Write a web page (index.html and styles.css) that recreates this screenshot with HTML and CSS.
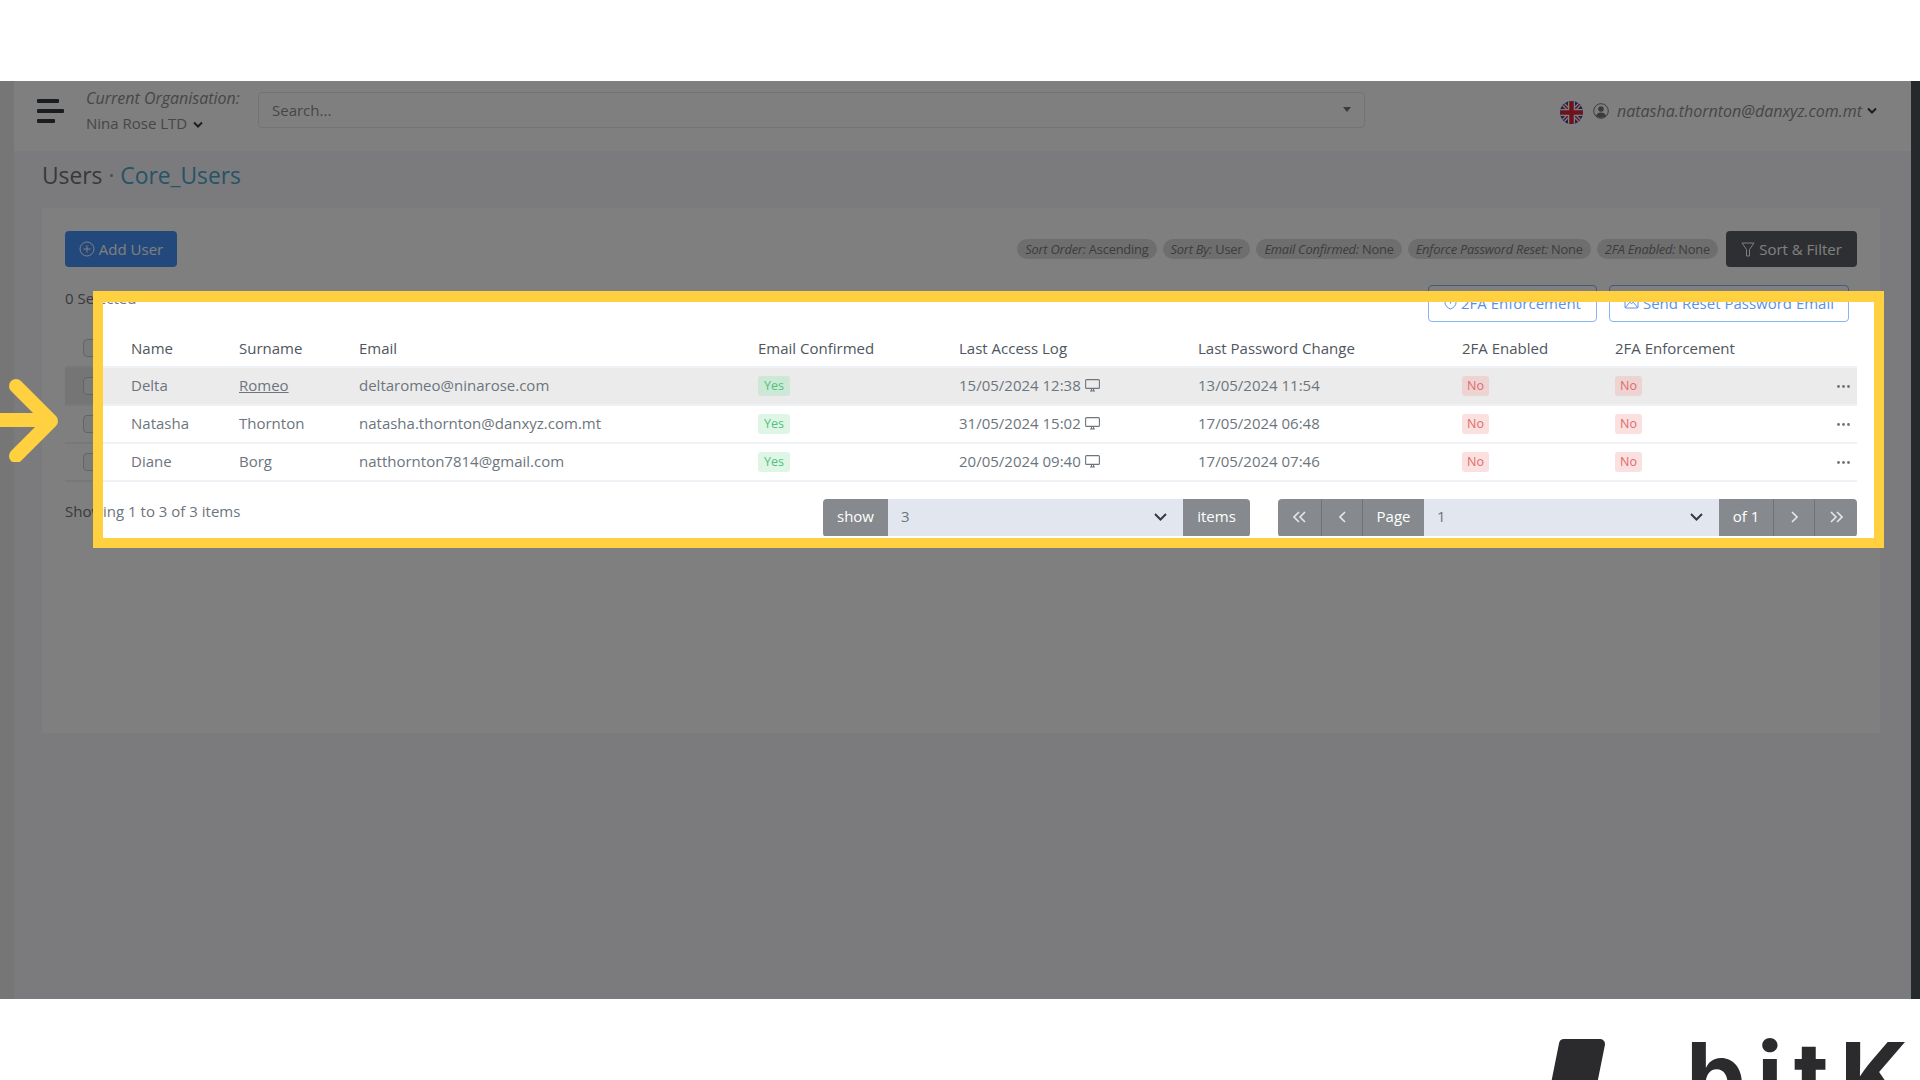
FILE: index.html
```html
<!DOCTYPE html>
<html lang="en">
<head>
    <meta charset="UTF-8">
    <title>Users - Core_Users</title>
    <link rel="stylesheet" href="styles.css">
</head>
<body>
    <div class="top-gap"></div>

    <div class="app">
        <div class="sidebar"></div>

        <div class="main">
            <header class="nav">
                <svg class="menu" width="27" height="24" viewBox="0 0 27 24">
                    <rect x="0" y="0" width="22" height="4" rx="1"/>
                    <rect x="0" y="10" width="27" height="4" rx="1"/>
                    <rect x="0" y="20" width="18" height="4" rx="1"/>
                </svg>
                <div class="org">
                    <div class="org-label">Current Organisation:</div>
                    <div class="org-name">Nina Rose LTD
                        <svg class="chev" width="10" height="8" viewBox="0 0 10 8"><path d="M1 1.5 5 5.5 9 1.5"/></svg>
                    </div>
                </div>
                <div class="search">
                    <span>Search...</span>
                    <i class="caret"></i>
                </div>
                <div class="account">
                    <svg class="flag" width="23" height="23" viewBox="0 0 23 23">
                        <clipPath id="flagclip"><circle cx="11.5" cy="11.5" r="11.5"/></clipPath>
                        <g clip-path="url(#flagclip)">
                            <rect width="23" height="23" fill="#2a4aa8"/>
                            <path d="M0 0 23 23M23 0 0 23" stroke="#fff" stroke-width="4"/>
                            <path d="M0 0 23 23M23 0 0 23" stroke="#d8283c" stroke-width="1.5"/>
                            <path d="M11.5 0V23M0 11.5H23" stroke="#fff" stroke-width="7"/>
                            <path d="M11.5 0V23M0 11.5H23" stroke="#d8283c" stroke-width="4.5"/>
                        </g>
                    </svg>
                    <svg class="user" width="16" height="16" viewBox="0 0 16 16">
                        <circle cx="8" cy="8" r="7.3" fill="none" stroke-width="1"/>
                        <circle class="solid" cx="8" cy="6" r="2.8"/>
                        <path class="solid" d="M3 12.8c.8-2.4 2.6-3.4 5-3.4s4.200 1 5 3.400c-1.300 1.300-3 2-5 2s-3.700-.7-5-2z"/>
                    </svg>
                    <span class="account-mail">natasha.thornton@danxyz.com.mt</span>
                    <svg class="chev" width="10" height="8" viewBox="0 0 10 8"><path d="M1 1.5 5 5.500 9 1.500"/></svg>
                </div>
            </header>

            <div class="content">
                <h1 class="title">Users <span class="dot">·</span> <a class="title-link">Core_Users</a></h1>

                <section class="card">
                    <div class="toolbar">
                        <button class="btn btn-blue">
                            <svg width="16" height="16" viewBox="0 0 16 16"><circle cx="8" cy="8" r="7"/><path d="M8 4.500v7M4.500 8h7"/></svg>
                            Add User
                        </button>
                        <div class="filters">
                            <span class="chip"><em>Sort Order:</em> Ascending</span>
                            <span class="chip"><em>Sort By:</em> User</span>
                            <span class="chip"><em>Email Confirmed:</em> None</span>
                            <span class="chip"><em>Enforce Password Reset:</em> None</span>
                            <span class="chip"><em>2FA Enabled:</em> None</span>
                            <button class="btn btn-dark">
                                <svg width="14" height="15" viewBox="0 0 14 15"><path d="M1 1h12L8.500 7.500V14H5.500V7.500z"/></svg>
                                Sort &amp; Filter
                            </button>
                        </div>
                    </div>

                    <div class="actions">
                        <span class="selected">0 Selected</span>
                        <div class="action-btns">
                            <button class="btn btn-line btn-2fa">
                                <svg width="13" height="15" viewBox="0 0 13 15"><path d="M6.500 1 12 3v4.500c0 3-2.200 5.300-5.500 6.500C3.200 12.800 1 10.500 1 7.500V3z"/><path d="M6.500 4.500v4"/></svg>
                                2FA Enforcement
                            </button>
                            <button class="btn btn-line btn-mail">
                                <svg width="15" height="13" viewBox="0 0 15 13"><rect x="1" y="1" width="13" height="11" rx="1"/><path d="M1 3l6.500 4.500L14 3M1 12l4.500-5.500M14 12 9.500 6.500"/></svg>
                                Send Reset Password Email
                            </button>
                        </div>
                    </div>

                    <table class="users">
                        <colgroup>
                            <col class="c-check"><col class="c-name"><col class="c-surname"><col class="c-email">
                            <col class="c-conf"><col class="c-access"><col class="c-pass"><col class="c-2fa">
                            <col class="c-enf"><col class="c-more">
                        </colgroup>
                        <thead>
                            <tr>
                                <th class="check"><i class="box"></i></th>
                                <th>Name</th>
                                <th>Surname</th>
                                <th>Email</th>
                                <th>Email Confirmed</th>
                                <th>Last Access Log</th>
                                <th>Last Password Change</th>
                                <th>2FA Enabled</th>
                                <th>2FA Enforcement</th>
                                <th></th>
                            </tr>
                        </thead>
                        <tbody>
                            <tr class="hover">
                                <td class="check"><i class="box"></i></td>
                                <td>Delta</td>
                                <td><a class="link">Romeo</a></td>
                                <td>deltaromeo@ninarose.com</td>
                                <td><span class="badge yes">Yes</span></td>
                                <td>15/05/2024 12:38 <svg class="screen" width="15" height="13" viewBox="0 0 15 13"><rect x=".6" y=".6" width="13.800" height="8.800" rx="1"/><path d="M5 12h5M6.500 9.500h2v2.500h-2z"/></svg></td>
                                <td>13/05/2024 11:54</td>
                                <td><span class="badge no">No</span></td>
                                <td><span class="badge no">No</span></td>
                                <td class="more"><svg width="13" height="3" viewBox="0 0 13 3"><circle cx="1.500" cy="1.500" r="1.400"/><circle cx="6.500" cy="1.500" r="1.400"/><circle cx="11.500" cy="1.500" r="1.400"/></svg></td>
                            </tr>
                            <tr>
                                <td class="check"><i class="box"></i></td>
                                <td>Natasha</td>
                                <td>Thornton</td>
                                <td>natasha.thornton@danxyz.com.mt</td>
                                <td><span class="badge yes">Yes</span></td>
                                <td>31/05/2024 15:02 <svg class="screen" width="15" height="13" viewBox="0 0 15 13"><rect x=".6" y=".6" width="13.800" height="8.800" rx="1"/><path d="M5 12h5M6.500 9.500h2v2.500h-2z"/></svg></td>
                                <td>17/05/2024 06:48</td>
                                <td><span class="badge no">No</span></td>
                                <td><span class="badge no">No</span></td>
                                <td class="more"><svg width="13" height="3" viewBox="0 0 13 3"><circle cx="1.500" cy="1.500" r="1.400"/><circle cx="6.500" cy="1.500" r="1.400"/><circle cx="11.500" cy="1.500" r="1.400"/></svg></td>
                            </tr>
                            <tr>
                                <td class="check"><i class="box"></i></td>
                                <td>Diane</td>
                                <td>Borg</td>
                                <td>natthornton7814@gmail.com</td>
                                <td><span class="badge yes">Yes</span></td>
                                <td>20/05/2024 09:40 <svg class="screen" width="15" height="13" viewBox="0 0 15 13"><rect x=".6" y=".6" width="13.800" height="8.800" rx="1"/><path d="M5 12h5M6.500 9.500h2v2.500h-2z"/></svg></td>
                                <td>17/05/2024 07:46</td>
                                <td><span class="badge no">No</span></td>
                                <td><span class="badge no">No</span></td>
                                <td class="more"><svg width="13" height="3" viewBox="0 0 13 3"><circle cx="1.500" cy="1.500" r="1.400"/><circle cx="6.500" cy="1.500" r="1.400"/><circle cx="11.500" cy="1.500" r="1.400"/></svg></td>
                            </tr>
                        </tbody>
                    </table>

                    <div class="pager-row">
                        <span class="showing">Showing 1 to 3 of 3 items</span>
                        <div class="group group-show">
                            <span class="addon w-show">show</span>
                            <div class="pick">3 <svg width="13" height="8" viewBox="0 0 13 8"><path d="M1 1l5.500 5.500L12 1"/></svg></div>
                            <span class="addon w-items">items</span>
                        </div>
                        <div class="group group-page">
                            <span class="addon w-nav"><svg width="13" height="12" viewBox="0 0 13 12"><path d="M6 1 1 6l5 5M12 1 7 6l5 5"/></svg></span>
                            <span class="addon w-nav2"><svg width="7" height="12" viewBox="0 0 7 12"><path d="M6 1 1 6l5 5"/></svg></span>
                            <span class="addon w-page">Page</span>
                            <div class="pick">1 <svg width="13" height="8" viewBox="0 0 13 8"><path d="M1 1l5.500 5.500L12 1"/></svg></div>
                            <span class="addon w-of">of 1</span>
                            <span class="addon w-nav2"><svg width="7" height="12" viewBox="0 0 7 12"><path d="M1 1l5 5-5 5"/></svg></span>
                            <span class="addon w-nav"><svg width="13" height="12" viewBox="0 0 13 12"><path d="M1 1l5 5-5 5M7 1l5 5-5 5"/></svg></span>
                        </div>
                    </div>
                </section>
            </div>
        </div>

        <div class="edge"></div>

        <!-- guide highlight: the hole in the dim layer -->
        <div class="spotlight"></div>
        <svg class="arrow" width="60" height="90" viewBox="0 0 60 90">
            <path d="M0 48H48M16 14 51 49 16 84"/>
        </svg>
    </div>

    <footer class="brand">
        <svg class="brand-mark" width="56" height="42" viewBox="0 0 56 42"><path d="M14 6H50L42 46H6z"/></svg>
        <span class="brand-name">bitK</span>
    </footer>
</body>
</html>
```

FILE: styles.css
```css
* {
    box-sizing: border-box;
}

html, body {
    margin: 0;
    height: 1080px;
    overflow: hidden;
    background-color: white;
    font-family: "Open Sans", "Noto Sans", Arial, sans-serif;
    font-size: 15px;
    color: #6c757d;
}

.top-gap {
    height: 81px;
}

.app {
    position: relative;
    display: flex;
    height: 918px;
    overflow: hidden;
    background-color: #f6f7fa;
}

.sidebar {
    width: 14px;
    background-color: #ececec;
}

.main {
    flex: 1;
    min-width: 0;
}

.edge {
    width: 9px;
    background-color: #4c5258;
}

/* top bar */
.nav {
    display: flex;
    align-items: center;
    height: 70px;
    padding: 0 34px 11px 0;
    background-color: white;
}

.menu {
    margin-left: 23px;
    fill: #343a40;
}

.org {
    width: 172px;
    margin-left: 22px;
    color: #8d8d8d;
}

.org-label {
    font-size: 16px;
    font-style: italic;
    line-height: 25px;
}

.org-name {
    line-height: 25px;
}

.chev {
    fill: none;
    stroke: #343a40;
    stroke-width: 2;
    margin-left: 2px;
}

.search {
    display: flex;
    align-items: center;
    justify-content: space-between;
    width: 1107px;
    height: 36px;
    margin-bottom: 2px;
    padding: 0 13px;
    border: 1px solid #e4e6ea;
    border-radius: 4px;
    color: #8d8d8d;
}

.caret {
    border-top: 5px solid #777;
    border-left: 4px solid transparent;
    border-right: 4px solid transparent;
}

.account {
    display: flex;
    align-items: center;
    margin-left: auto;
    color: #8d8d8d;
}

.flag {
    margin-top: 4px;
    margin-right: 10px;
}

.user {
    stroke: #777;
    margin-right: 8px;
}

.user .solid {
    fill: #777;
    stroke: none;
}

.account-mail {
    font-size: 16px;
    font-style: italic;
    margin-right: 3px;
}

/* page */
.content {
    padding: 0 31px 0 28px;
}

.title {
    margin: 0;
    height: 57px;
    font-size: 22.8px;
    font-weight: 400;
    line-height: 50px;
    color: #6e7074;
}

.dot {
    color: #999;
}

.title-link {
    color: #4aa6d0;
}

.card {
    height: 525px;
    padding: 23px 23px 0;
    background-color: white;
}

.toolbar {
    display: flex;
    justify-content: space-between;
    align-items: center;
}

.filters {
    display: flex;
    align-items: center;
    gap: 6px;
}

.chip {
    height: 20px;
    padding: 0 8px;
    border-radius: 10px;
    background-color: #dcdcdc;
    font-size: 12.85px;
    line-height: 20px;
    letter-spacing: -0.2px;
    color: #7a7a7a;
}

.btn {
    display: flex;
    align-items: center;
    justify-content: center;
    gap: 4px;
    height: 36px;
    padding: 0;
    border: none;
    border-radius: 4px;
    font-family: inherit;
    font-size: 15px;
}

.btn svg {
    fill: none;
    stroke: currentColor;
    stroke-width: 1;
}

.btn-blue {
    width: 112px;
    background-color: #4692f8;
    color: white;
}

.btn-dark {
    width: 131px;
    margin-left: 2px;
    background-color: #5a5f65;
    color: white;
}

.actions {
    display: flex;
    justify-content: space-between;
    align-items: center;
    height: 37px;
    margin-top: 18px;
    padding-right: 8px;
}

.selected {
    margin-bottom: 11px;
}

.action-btns {
    display: flex;
    gap: 12px;
}

.btn-line {
    height: 37px;
    padding-bottom: 2px;
    border: 1px solid #8ab4f0;
    background-color: white;
    color: #5b90ea;
}

.btn-2fa {
    width: 169px;
}

.btn-mail {
    width: 240px;
}

/* table */
.users {
    width: 100%;
    margin-top: 8px;
    border-collapse: collapse;
    table-layout: fixed;
}

.c-check { width: 54px; }
.c-name { width: 108px; }
.c-surname { width: 120px; }
.c-email { width: 399px; }
.c-conf { width: 201px; }
.c-access { width: 239px; }
.c-pass { width: 264px; }
.c-2fa { width: 153px; }
.c-more { width: 57px; }

.users th {
    height: 37px;
    padding: 0 12px;
    border-bottom: 2px solid #eef1f5;
    text-align: left;
    font-weight: 500;
    color: #4f565c;
}

.users td {
    height: 38px;
    padding: 0 12px 2px;
    border-bottom: 2px solid #eef1f5;
    white-space: nowrap;
}

.users .check {
    padding: 0 0 0 18px;
}

.hover td {
    background-color: #ebebeb;
}

.box {
    display: block;
    width: 18px;
    height: 18px;
    border: 1px solid #c4c8cc;
    border-radius: 4px;
    background-color: #f4f4f4;
}

.link {
    text-decoration: underline;
}

.screen {
    vertical-align: -1px;
    fill: none;
    stroke: #6c757d;
    stroke-width: 1.100;
}

.badge {
    display: inline-block;
    height: 20px;
    margin-top: 2px;
    padding: 0 6px;
    border-radius: 3px;
    font-size: 12.500px;
    line-height: 20px;
    vertical-align: middle;
}

.yes {
    background-color: #dff5e6;
    color: #4cc47c;
}

.no {
    padding: 0 5px;
    background-color: #fbe0e0;
    color: #e06b6b;
}

.hover .yes {
    background-color: #cde8d6;
}

.hover .no {
    background-color: #eed3d3;
}

.more {
    text-align: right;
}

.more svg {
    fill: #6c757d;
    margin-right: -5px;
    vertical-align: 3px;
}

/* paging */
.pager-row {
    display: flex;
    align-items: center;
    height: 38px;
    margin-top: 17px;
}

.showing {
    width: 758px;
    margin-bottom: 14px;
}

.group {
    display: flex;
    height: 38px;
    padding-bottom: 1px;
    border-radius: 4px;
    overflow: hidden;
    line-height: 1;
}

.group-show {
    width: 427px;
}

.group-page {
    width: 579px;
    margin-left: 28px;
}

.addon {
    display: flex;
    flex: none;
    align-items: center;
    justify-content: center;
    padding-bottom: 2px;
    background-color: #868a8e;
    color: white;
}

.addon + .addon {
    border-left: 1px solid #6f7377;
}

.addon svg {
    fill: none;
    stroke: #e4e6ea;
    stroke-width: 1.600;
}

.w-show { width: 65px; }
.w-items { width: 67px; }
.w-nav { width: 43px; }
.w-nav2 { width: 41px; }
.w-page { width: 62px; }
.w-of { width: 54px; }

.pick {
    flex: 1;
    display: flex;
    align-items: center;
    justify-content: space-between;
    padding: 0 16px 2px 13px;
    background-color: #e2e6ee;
}

.pick svg {
    fill: none;
    stroke: #343a40;
    stroke-width: 2;
}

/* guide layer */
.spotlight {
    position: absolute;
    left: 93px;
    top: 210px;
    width: 1791px;
    height: 257px;
    border: 10px solid #ffd040;
    border-top-width: 11px;
    box-shadow: 0 0 0 3000px rgba(0, 0, 0, 0.5);
}

.arrow {
    position: absolute;
    left: 0;
    top: 291px;
}

.arrow path {
    fill: none;
    stroke: #ffd040;
    stroke-width: 14;
    stroke-linecap: round;
    stroke-linejoin: round;
}

/* logo cut by the bottom of the shot */
.brand {
    display: flex;
    height: 81px;
    overflow: hidden;
    padding-left: 1550px;
}

.brand-mark {
    flex: none;
    margin-top: 39px;
    fill: #2b2a2d;
    stroke: #2b2a2d;
    stroke-width: 10;
    stroke-linejoin: round;
}

.brand-name {
    margin-left: 80px;
    margin-top: 23px;
    font-family: Inter, "Liberation Sans", sans-serif;
    font-size: 95px;
    font-weight: 700;
    letter-spacing: 11px;
    line-height: 110px;
    white-space: nowrap;
    color: #2b2a2d;
}
```
